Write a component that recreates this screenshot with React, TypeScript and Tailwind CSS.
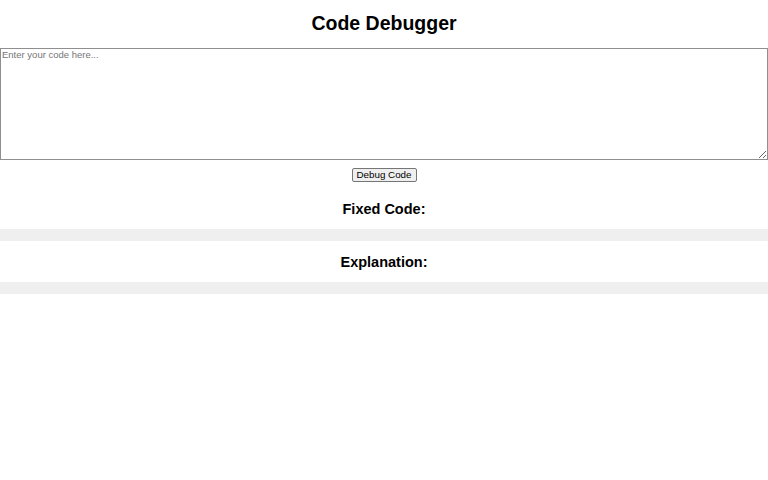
import React, { useState } from 'react';

const App: React.FC = () => {
  const [code, setCode] = useState('');

  return (
    <div className="min-h-[480px] bg-white text-center text-black font-['Liberation_Sans',Arial,sans-serif]">
      <h1 className="pt-[12px] h-[48px] text-[19.5px] leading-[22px] font-bold">Code Debugger</h1>

      <textarea
        value={code}
        onChange={(e) => setCode(e.target.value)}
        placeholder="Enter your code here..."
        className="block w-full h-[112px] border border-[#8f8f8f] px-[1px] pt-0 text-[9.5px] leading-[12px] text-left placeholder:text-[#757575] outline-none"
      />

      <div className="mt-[8px] flex justify-center">
        <button className="w-[65px] h-[14px] border border-[#767676] rounded-[2px] bg-[#efefef] text-[9.8px] leading-[12px]">
          Debug Code
        </button>
      </div>

      <h2 className="mt-[18px] h-[18px] text-[14.5px] leading-[18px] font-bold">Fixed Code:</h2>
      <pre className="mt-[11px] h-[12px] bg-[#efefef]"></pre>

      <h2 className="mt-[12px] h-[18px] text-[14.5px] leading-[18px] font-bold">Explanation:</h2>
      <pre className="mt-[11px] h-[12px] bg-[#efefef]"></pre>
    </div>
  );
};

export default App;
